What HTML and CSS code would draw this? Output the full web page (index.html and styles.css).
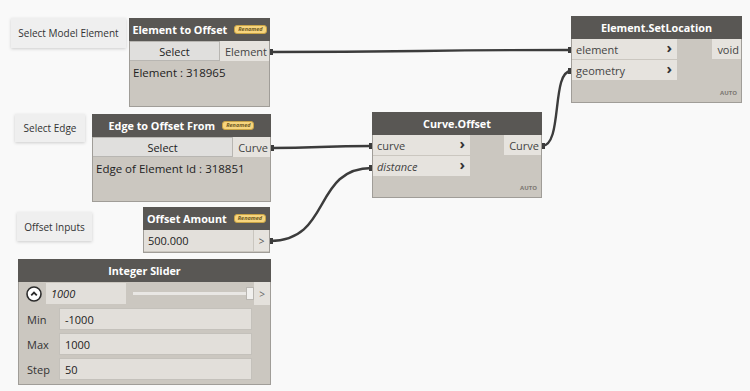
FILE: index.html
```html
<!DOCTYPE html>
<html lang="en">
<head>
    <meta charset="UTF-8">
    <meta name="viewport" content="width=device-width, initial-scale=1.0">
    <title>Dynamo Graph</title>
    <link rel="stylesheet" href="styles.css">
</head>
<body>
    <div class="canvas">
        <svg class="wires" width="750" height="391" viewBox="0 0 750 391">
            <path d="M270,52 C420,52 420,50 571,50" />
            <path d="M542,146 C563,146 551,71 571,71" />
            <path d="M271,148 C320,148 320,146 372,146" />
            <path d="M270,241 C332,241 312,168 372,168" />
            <g class="plugs">
                <rect x="270" y="49" width="3" height="6" />
                <rect x="568" y="47" width="3" height="6" />
                <rect x="568" y="68" width="3" height="6" />
                <rect x="542" y="143" width="3" height="6" />
                <rect x="271" y="145" width="3" height="6" />
                <rect x="369" y="143" width="3" height="6" />
                <rect x="369" y="165" width="3" height="6" />
                <rect x="270" y="238" width="3" height="6" />
            </g>
        </svg>

        <div class="note note-model">Select Model Element</div>
        <div class="note note-edge">Select Edge</div>
        <div class="note note-inputs">Offset Inputs</div>

        <div class="node node-element">
            <div class="node-head">Element to Offset <span class="badge">Renamed</span></div>
            <div class="select-row">
                <div class="select-btn">Select</div>
                <div class="out-port">Element</div>
            </div>
            <div class="node-info">Element : 318965</div>
        </div>

        <div class="node node-edge">
            <div class="node-head">Edge to Offset From <span class="badge">Renamed</span></div>
            <div class="select-row">
                <div class="select-btn">Select</div>
                <div class="out-port">Curve</div>
            </div>
            <div class="node-info">Edge of Element Id : 318851</div>
        </div>

        <div class="node node-amount">
            <div class="node-head">Offset Amount <span class="badge">Renamed</span></div>
            <div class="amount-row">
                <div class="amount-value">500.000</div>
                <div class="amount-arrow">&gt;</div>
            </div>
        </div>

        <div class="node node-offset">
            <div class="node-head">Curve.Offset</div>
            <div class="node-ports">
                <div class="in-ports">
                    <div class="in-port"><span>curve</span><span class="chev">&#x203A;</span></div>
                    <div class="in-port"><span class="italic">distance</span><span class="chev">&#x203A;</span></div>
                </div>
                <div class="out-ports">
                    <div class="out-port">Curve</div>
                </div>
            </div>
            <div class="lacing">AUTO</div>
        </div>

        <div class="node node-location">
            <div class="node-head">Element.SetLocation</div>
            <div class="node-ports">
                <div class="in-ports">
                    <div class="in-port"><span>element</span><span class="chev">&#x203A;</span></div>
                    <div class="in-port"><span>geometry</span><span class="chev">&#x203A;</span></div>
                </div>
                <div class="out-ports">
                    <div class="out-port">void</div>
                </div>
            </div>
            <div class="lacing">AUTO</div>
        </div>

        <div class="node node-slider">
            <div class="node-head">Integer Slider</div>
            <div class="slider-row">
                <div class="toggle">
                    <svg width="16" height="16" viewBox="0 0 16 16">
                        <circle cx="8" cy="8" r="7" fill="#fff" stroke="#2b2b2b" stroke-width="1.6" />
                        <path d="M5.2,9.4 L8,6.6 L10.8,9.4" fill="none" stroke="#2b2b2b" stroke-width="1.8" />
                    </svg>
                </div>
                <div class="slider-value">1000</div>
                <div class="slider-track">
                    <div class="track-bar"></div>
                    <div class="thumb"></div>
                </div>
                <div class="slider-arrow">&gt;</div>
            </div>
            <div class="range-row"><span class="range-label">Min</span><div class="range-input">-1000</div></div>
            <div class="range-row"><span class="range-label">Max</span><div class="range-input">1000</div></div>
            <div class="range-row"><span class="range-label">Step</span><div class="range-input">50</div></div>
        </div>
    </div>
</body>
</html>
```

FILE: styles.css
```css
* {
    box-sizing: border-box;
}

body {
    margin: 0;
    padding: 0;
    background-color: #f9f9f9;
    font-family: 'Open Sans', 'Noto Sans', sans-serif;
    font-size: 11px;
    color: #333;
}

.canvas {
    position: relative;
    width: 750px;
    height: 391px;
    overflow: hidden;
}

.wires {
    position: absolute;
    left: 0;
    top: 0;
    z-index: 2;
    pointer-events: none;
}

.wires path {
    fill: none;
    stroke: #3c3c3c;
    stroke-width: 2.4;
}

.plugs rect {
    fill: #3c3c3c;
}

/* notes */
.note {
    position: absolute;
    background-color: #efefef;
    box-shadow: 0 1px 3px rgba(0, 0, 0, 0.18);
    display: flex;
    align-items: center;
    justify-content: center;
    font-size: 10px;
    color: #333;
}

.note-model { left: 11px; top: 18px; width: 115px; height: 30px; }
.note-edge { left: 15px; top: 114px; width: 70px; height: 28px; }
.note-inputs { left: 17px; top: 212px; width: 75px; height: 29px; }

/* nodes */
.node {
    position: absolute;
    background-color: #cbc7c0;
    border: 1px solid #a09d98;
    display: flex;
    flex-direction: column;
}

.node-element { left: 129px; top: 18px; width: 141px; height: 89px; }
.node-edge { left: 92px; top: 114px; width: 179px; height: 88px; }
.node-amount { left: 143px; top: 207px; width: 127px; height: 46px; }
.node-offset { left: 372px; top: 112px; width: 170px; height: 86px; }
.node-location { left: 571px; top: 16px; width: 171px; height: 87px; }
.node-slider { left: 18px; top: 259px; width: 253px; height: 126px; }

.node-head {
    background-color: #595754;
    color: #fff;
    font-weight: bold;
    font-size: 10.8px;
    height: 23px;
    display: flex;
    align-items: center;
    justify-content: center;
    gap: 7px;
    margin: -1px -1px 0 -1px;
}

.badge {
    background-color: #f7d57e;
    border: 1px solid #c9a446;
    border-radius: 3px;
    color: #6e5a24;
    font-size: 5.5px;
    font-style: italic;
    font-weight: bold;
    padding: 0 3px;
    height: 9px;
    line-height: 7px;
}

.select-row {
    display: flex;
    height: 20px;
}

.select-btn {
    flex: 1;
    background-color: #e0dfdd;
    border: 1px solid #b8b6b2;
    border-left: none;
    display: flex;
    align-items: center;
    justify-content: center;
    color: #222;
}

.out-port {
    background-color: #e6e3de;
    display: flex;
    align-items: center;
    justify-content: flex-end;
    padding: 0 2px 0 5px;
    color: #444;
    height: 20px;
}

.node-info {
    padding: 4px 3px;
    color: #222;
    font-size: 11.5px;
}

.amount-row {
    display: flex;
    height: 21px;
}

.amount-value {
    flex: 1;
    background-color: #e3e0db;
    display: flex;
    align-items: center;
    padding-left: 4px;
    color: #222;
}

.amount-arrow {
    width: 16px;
    background-color: #e6e3de;
    border-left: 1px solid #cac6bf;
    display: flex;
    align-items: center;
    justify-content: center;
    color: #555;
    font-size: 10px;
}

.node-ports {
    display: flex;
    justify-content: space-between;
}

.in-ports {
    display: flex;
    flex-direction: column;
    gap: 1px;
}

.in-port {
    height: 20px;
    background-color: #e6e3de;
    display: flex;
    align-items: center;
    justify-content: space-between;
    padding: 0 5px 0 4px;
    color: #444;
}

.node-offset .in-ports { width: 97px; }
.node-location .in-ports { width: 105px; }

.chev {
    font-weight: bold;
    font-size: 15px;
    color: #333;
    line-height: 1;
    margin-top: -3px;
}

.italic {
    font-style: italic;
}

.lacing {
    margin-top: auto;
    align-self: flex-end;
    font-size: 6px;
    font-weight: bold;
    color: #7a7670;
    padding: 0 4px 5px 0;
}

/* slider */
.slider-row {
    display: flex;
    align-items: center;
    height: 23px;
}

.toggle {
    width: 27px;
    display: flex;
    justify-content: center;
    padding-left: 3px;
}

.toggle svg {
    display: block;
}

.slider-value {
    width: 80px;
    height: 21px;
    background-color: #e2dfda;
    display: flex;
    align-items: center;
    padding-left: 5px;
    font-style: italic;
    color: #222;
}

.slider-track {
    position: relative;
    flex: 1;
    height: 21px;
    margin-left: 7px;
}

.track-bar {
    position: absolute;
    left: 0;
    right: 4px;
    top: 9px;
    height: 3px;
    background-color: #e9e7e4;
}

.thumb {
    position: absolute;
    right: 0;
    top: 4px;
    width: 8px;
    height: 13px;
    background-color: #f1f0ee;
    border: 1px solid #b9b6b1;
}

.slider-arrow {
    width: 16px;
    height: 23px;
    background-color: #e4e1dc;
    display: flex;
    align-items: center;
    justify-content: center;
    color: #666;
    font-size: 10px;
}

.range-row {
    display: flex;
    align-items: center;
    height: 22px;
    margin-top: 3px;
}

.range-row:first-of-type {
    margin-top: 4px;
}

.range-label {
    width: 40px;
    padding-left: 8px;
    color: #333;
}

.range-input {
    width: 193px;
    height: 22px;
    background-color: #e2dfda;
    border: 1px solid #c4c1bb;
    display: flex;
    align-items: center;
    padding-left: 5px;
    color: #222;
}
```
